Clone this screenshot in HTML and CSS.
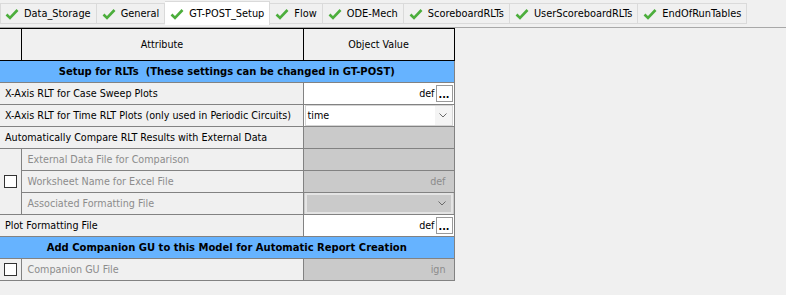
FILE: index.html
```html
<!DOCTYPE html>
<html lang="en">
<head>
    <meta charset="UTF-8">
    <title>GT-POST_Setup</title>
    <link rel="stylesheet" href="styles.css">
</head>
<body>
    <div class="tab-bar">
        <div class="tab"><svg class="tick" viewBox="0 0 14 12"><path d="M1.5 6.5 L5 10 L12.5 2"/></svg>Data_Storage</div>
        <div class="tab"><svg class="tick" viewBox="0 0 14 12"><path d="M1.5 6.5 L5 10 L12.5 2"/></svg>General</div>
        <div class="tab active"><svg class="tick" viewBox="0 0 14 12"><path d="M1.5 6.5 L5 10 L12.5 2"/></svg>GT-POST_Setup</div>
        <div class="tab"><svg class="tick" viewBox="0 0 14 12"><path d="M1.5 6.5 L5 10 L12.5 2"/></svg>Flow</div>
        <div class="tab"><svg class="tick" viewBox="0 0 14 12"><path d="M1.5 6.5 L5 10 L12.5 2"/></svg>ODE-Mech</div>
        <div class="tab"><svg class="tick" viewBox="0 0 14 12"><path d="M1.5 6.5 L5 10 L12.5 2"/></svg>ScoreboardRLTs</div>
        <div class="tab"><svg class="tick" viewBox="0 0 14 12"><path d="M1.5 6.5 L5 10 L12.5 2"/></svg>UserScoreboardRLTs</div>
        <div class="tab"><svg class="tick" viewBox="0 0 14 12"><path d="M1.5 6.5 L5 10 L12.5 2"/></svg>EndOfRunTables</div>
    </div>

    <table class="attr-table">
        <colgroup>
            <col class="col-check">
            <col class="col-attr">
            <col class="col-value">
        </colgroup>
        <thead>
            <tr>
                <th></th>
                <th>Attribute</th>
                <th>Object Value</th>
            </tr>
        </thead>
        <tbody>
            <tr class="section">
                <td colspan="3">Setup for RLTs&nbsp; (These settings can be changed in GT-POST)</td>
            </tr>
            <tr>
                <td colspan="2" class="label">X-Axis RLT for Case Sweep Plots</td>
                <td class="value">
                    <div class="field"><span>def</span><span class="browse">...</span></div>
                </td>
            </tr>
            <tr>
                <td colspan="2" class="label">X-Axis RLT for Time RLT Plots (only used in Periodic Circuits)</td>
                <td class="value">
                    <div class="combo">
                        <span class="combo-text">time</span>
                        <span class="combo-arrow"><svg viewBox="0 0 8 5"><path d="M0.5 0.5 L4 4 L7.5 0.5"/></svg></span>
                    </div>
                </td>
            </tr>
            <tr>
                <td colspan="2" class="label">Automatically Compare RLT Results with External Data</td>
                <td class="value off"></td>
            </tr>
            <tr>
                <td rowspan="3" class="check"><span class="box"></span></td>
                <td class="label sub">External Data File for Comparison</td>
                <td class="value off"></td>
            </tr>
            <tr>
                <td class="label sub">Worksheet Name for Excel File</td>
                <td class="value off"><div class="field muted"><span>def</span></div></td>
            </tr>
            <tr>
                <td class="label sub">Associated Formatting File</td>
                <td class="value off">
                    <div class="combo disabled">
                        <span class="combo-text"></span>
                        <span class="combo-arrow"><svg viewBox="0 0 8 5"><path d="M0.5 0.5 L4 4 L7.5 0.5"/></svg></span>
                    </div>
                </td>
            </tr>
            <tr>
                <td colspan="2" class="label">Plot Formatting File</td>
                <td class="value">
                    <div class="field"><span>def</span><span class="browse">...</span></div>
                </td>
            </tr>
            <tr class="section">
                <td colspan="3">Add Companion GU to this Model for Automatic Report Creation</td>
            </tr>
            <tr>
                <td class="check"><span class="box"></span></td>
                <td class="label sub">Companion GU File</td>
                <td class="value off"><div class="field muted"><span>ign</span></div></td>
            </tr>
        </tbody>
    </table>
</body>
</html>
```

FILE: styles.css
```css
:root {
    --panel: #f0f0f0;
    --grid: #828282;
    --disabled: #cacaca;
    --section: #66b3ff;
    --muted: #8c8c8c;
    --tick: #4cae3c;
}
body {
    margin: 0;
    background: var(--panel);
    color: #000;
    font-family: 'DejaVu Sans', Tahoma, sans-serif;
    font-size: 9.6px;
}

/* tabs */
.tab-bar {
    display: flex;
    height: 28px;
    box-sizing: border-box;
    border-bottom: 1px solid #a8a8a8;
}
.tab {
    flex: none;
    display: flex;
    align-items: center;
    gap: 5px;
    margin-top: 3px;
    height: 21px;
    box-sizing: border-box;
    padding: 0 5px 0 5px;
    border: 1px solid #dadada;
    border-left: none;
    font-size: 9.8px;
    white-space: nowrap;
}
.tab:first-child {
    border-left: 1px solid #dadada;
    padding-left: 4px;
}
.tab.active {
    background: #fff;
    margin-top: 1px;
    height: 24px;
    border-bottom: none;
}
.tick {
    width: 14px;
    height: 12px;
    flex: none;
}
.tick path {
    fill: none;
    stroke: var(--tick);
    stroke-width: 2.6;
}

/* attribute grid */
.attr-table {
    border-collapse: collapse;
    table-layout: fixed;
    width: 454px;
}
.col-check { width: 21px; }
.col-attr { width: 282px; }
.col-value { width: 151px; }
.attr-table th {
    height: 31px;
    padding: 0;
    font-weight: normal;
    border: 1px solid #000;
}
.attr-table th:first-child {
    border-left: none;
}
.attr-table td {
    height: 21px;
    padding: 0;
    border: 1px solid var(--grid);
    white-space: nowrap;
}
.attr-table td:first-child {
    border-left: none;
}
.section td {
    background: var(--section);
    text-align: center;
    font-weight: bold;
    font-size: 10px;
}
.label {
    padding-left: 5px !important;
}
.label.sub {
    padding-left: 6px !important;
    color: var(--muted);
}
.value {
    background: #fff;
}
.value.off {
    background: var(--disabled);
}
.check {
    text-align: center;
}
.box {
    display: inline-block;
    width: 11px;
    height: 11px;
    border: 1px solid #333;
    background: #fff;
    vertical-align: middle;
}
.field {
    display: flex;
    justify-content: flex-end;
    align-items: center;
    gap: 1px;
    padding-right: 1px;
}
.field.muted {
    color: var(--muted);
    padding-right: 8px;
}
.browse {
    display: flex;
    align-items: flex-end;
    justify-content: center;
    width: 15px;
    height: 15px;
    border: 1px solid #999;
    background: #fff;
    font-weight: bold;
    line-height: 13px;
}
.combo {
    display: flex;
    align-items: stretch;
    height: 19px;
    margin: 0 1px;
    border: 1px solid #d4d4d4;
}
.combo-text {
    flex: 1;
    display: flex;
    align-items: center;
    padding-left: 2px;
}
.combo-arrow {
    width: 17px;
    display: flex;
    align-items: center;
    justify-content: center;
    background: #f4f4f4;
}
.combo-arrow svg {
    width: 8px;
    height: 5px;
}
.combo-arrow path {
    fill: none;
    stroke: #6a6a6a;
    stroke-width: 1;
}
.combo.disabled {
    border: 2px solid #e4e4e4;
    height: 17px;
    background: var(--disabled);
}
.combo.disabled .combo-arrow {
    background: transparent;
}
```
